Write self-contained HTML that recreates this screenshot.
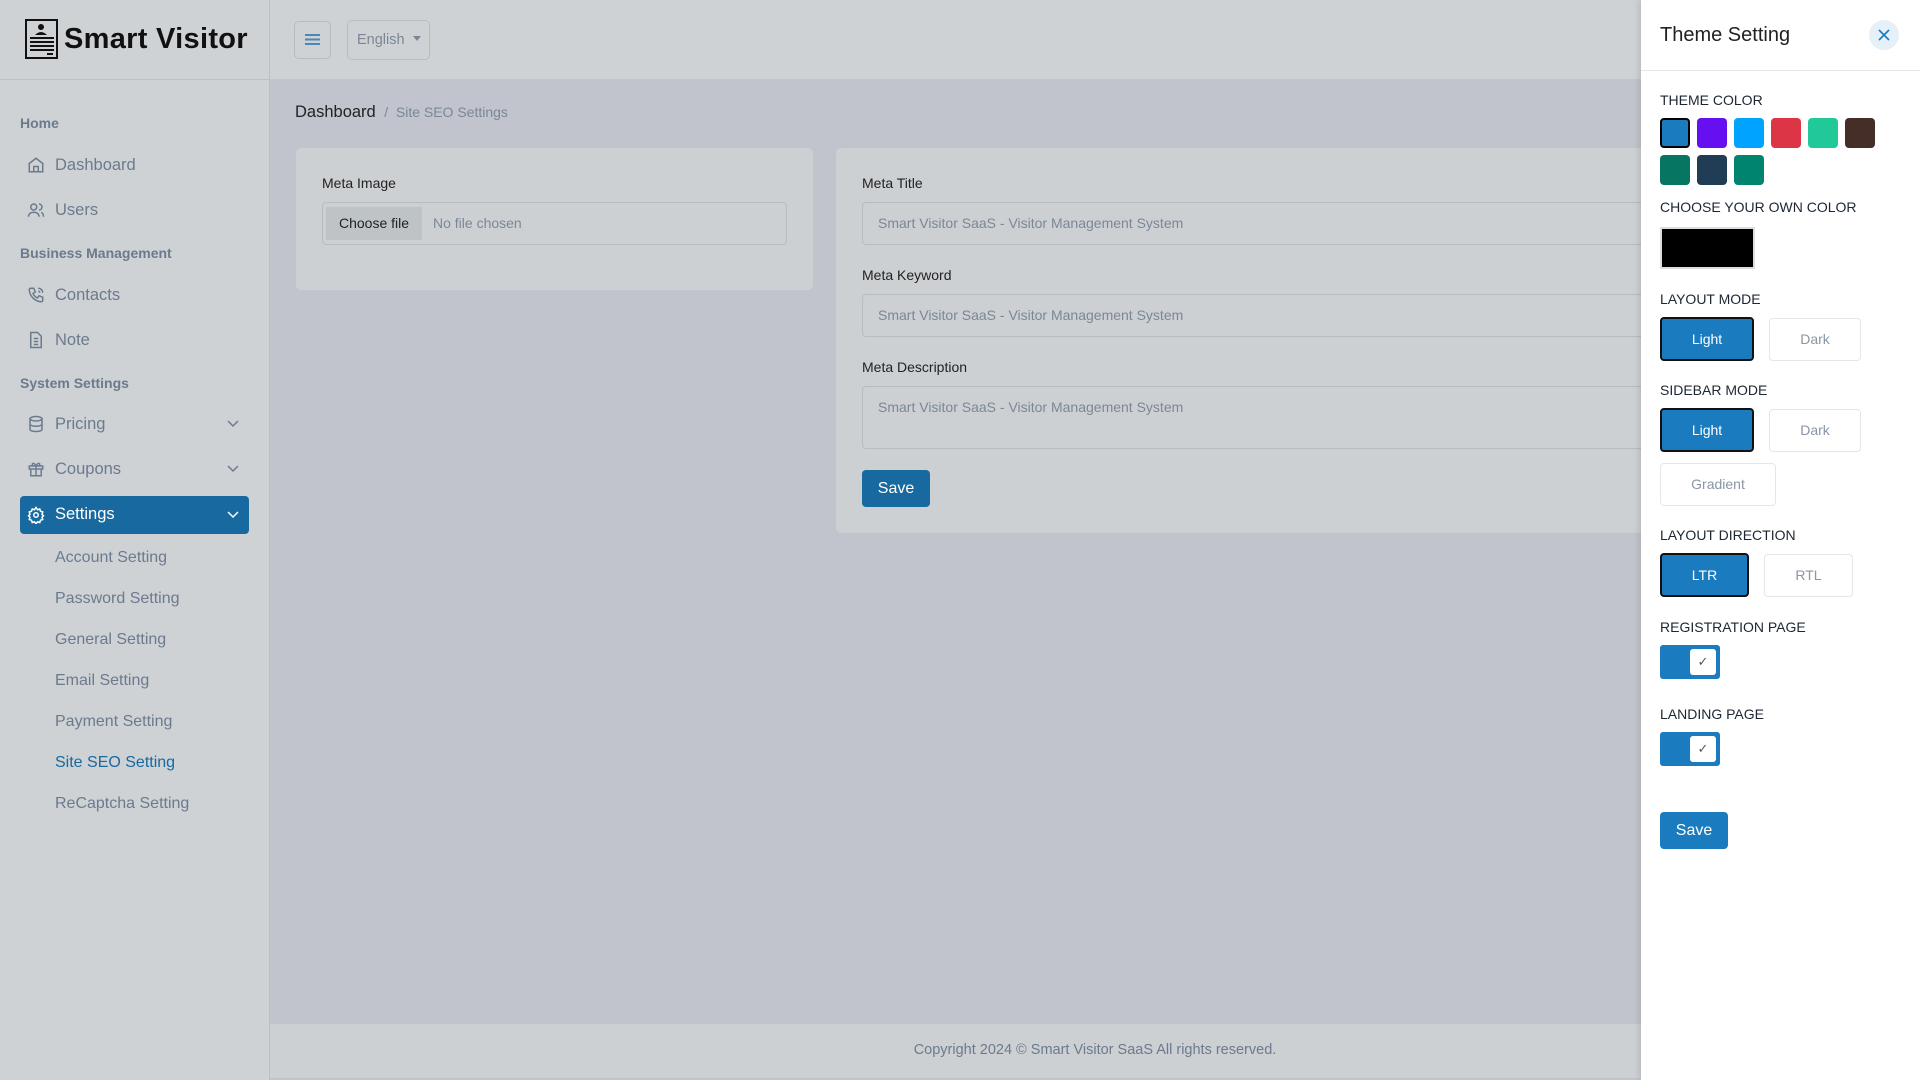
<!DOCTYPE html>
<html><head><meta charset="utf-8"><style>
*{box-sizing:border-box;margin:0;padding:0}
body{width:1920px;height:1080px;overflow:hidden;font-family:"Liberation Sans",sans-serif;background:#c1c4cc;position:relative}
.abs{position:absolute}
.sb{left:0;top:0;width:270px;height:1080px;background:#cfd2d5;border-right:1px solid #bcc0c5}
.sbh{left:0;top:0;width:269px;height:80px;border-bottom:1px solid #bcc0c5}
.logo{left:64px;top:23px;font-weight:bold;font-size:29px;color:#111;letter-spacing:.3px}
.sec{left:20px;font-size:14px;font-weight:bold;color:#6b7a8d}
.mi{left:55px;font-size:16.5px;color:#6b7a8d}
.ic{left:27px;width:18px;height:18px}
.sub{left:55px;font-size:16px;color:#6b7a8d}
.hdr{left:270px;top:0;width:1371px;height:80px;background:#cfd2d5;border-bottom:1px solid #c3c6cb}
.card{background:#cdd0d3;border-radius:5px}
.lbl{font-size:14px;color:#222}
.inp{border:1px solid #b8bcc1;border-radius:4px;font-size:14px;color:#7b8796;padding-left:15px;line-height:41px}
.panel{left:1641px;top:0;width:279px;height:1080px;background:#fff;box-shadow:-2px 0 6px rgba(0,0,0,.12)}
.pl{left:19px;font-size:14px;color:#1d2733}
.sw{width:30px;height:30px;border-radius:4px}
.btn{border-radius:4px;font-size:14px;text-align:center}
.on{background:#1b7bbf;color:#fff;border:2px solid #111}
.off{background:#fff;color:#8a96a5;border:1px solid #e3e6ea}
.tg{left:19px;width:60px;height:34px;background:#1b7bbf;border-radius:3px}
.tg div{position:absolute;right:4px;top:4px;width:26px;height:26px;background:#fff;border-radius:3px;font-size:13px;color:#555;text-align:center;line-height:26px}
</style></head><body>
<div class="abs sb"></div>
<div class="abs sbh"></div>
<svg class="abs" style="left:25px;top:19px" width="34" height="41" viewBox="0 0 34 41"><rect x="1" y="1" width="31" height="38" fill="none" stroke="#111" stroke-width="2"/><circle cx="16" cy="8" r="3" fill="#111"/><path d="M10 16 Q16 10 22 16Z" fill="#111"/><path d="M5 19h24M5 23h24M5 27h24M5 31h24M22 35h6" stroke="#111" stroke-width="2"/></svg>
<div class="abs logo">Smart Visitor</div>
<div class="abs sec" style="top:115px">Home</div>
<svg class="abs ic" style="top:156px" viewBox="0 0 24 24" fill="none" stroke="#6b7a8d" stroke-width="2"><path d="M3 10 12 3l9 7v11H3z"/><path d="M9 21v-7h6v7"/></svg>
<div class="abs mi" style="top:156px">Dashboard</div>
<svg class="abs ic" style="top:201px" viewBox="0 0 24 24" fill="none" stroke="#6b7a8d" stroke-width="2"><circle cx="9" cy="8" r="4"/><path d="M2 21c0-4 3-6 7-6s7 2 7 6M16 4a4 4 0 0 1 0 8M19 15c2 1 3 3 3 6"/></svg>
<div class="abs mi" style="top:201px">Users</div>
<div class="abs sec" style="top:245px">Business Management</div>
<svg class="abs ic" style="top:286px" viewBox="0 0 24 24" fill="none" stroke="#6b7a8d" stroke-width="2"><path d="M5 3h4l2 5-3 2a11 11 0 0 0 6 6l2-3 5 2v4a2 2 0 0 1-2 2A17 17 0 0 1 3 5a2 2 0 0 1 2-2M15 3a6 6 0 0 1 6 6M15 7a2 2 0 0 1 2 2"/></svg>
<div class="abs mi" style="top:286px">Contacts</div>
<svg class="abs ic" style="top:331px" viewBox="0 0 24 24" fill="none" stroke="#6b7a8d" stroke-width="2"><path d="M5 2h9l5 5v15H5z"/><path d="M9 10h6M9 14h6M9 18h6"/></svg>
<div class="abs mi" style="top:331px">Note</div>
<div class="abs sec" style="top:375px">System Settings</div>
<svg class="abs ic" style="top:415px" viewBox="0 0 24 24" fill="none" stroke="#6b7a8d" stroke-width="2"><ellipse cx="12" cy="5" rx="8" ry="3"/><path d="M4 5v14c0 2 4 3 8 3s8-1 8-3V5M4 12c0 2 4 3 8 3s8-1 8-3"/></svg>
<div class="abs mi" style="top:415px">Pricing</div>
<svg class="abs" style="left:227px;top:420px" width="12" height="8" viewBox="0 0 12 8" fill="none" stroke="#6b7a8d" stroke-width="1.5"><path d="M1 1l5 5 5-5"/></svg>
<svg class="abs ic" style="top:460px" viewBox="0 0 24 24" fill="none" stroke="#6b7a8d" stroke-width="2"><rect x="3" y="8" width="18" height="4"/><path d="M5 12v9h14v-9M12 8v13M12 8C9 2 5 5 8 8M12 8c3-6 7-3 4 0"/></svg>
<div class="abs mi" style="top:460px">Coupons</div>
<svg class="abs" style="left:227px;top:465px" width="12" height="8" viewBox="0 0 12 8" fill="none" stroke="#6b7a8d" stroke-width="1.5"><path d="M1 1l5 5 5-5"/></svg>
<div class="abs" style="left:20px;top:496px;width:229px;height:38px;background:#1769a0;border-radius:4px"></div>
<svg class="abs ic" style="top:506px" viewBox="0 0 24 24" fill="none" stroke="#fff" stroke-width="2"><circle cx="12" cy="12" r="3"/><path d="M12 2l2 3 3-1 1 3 3 1-1 3 2 2-2 2 1 3-3 1-1 3-3-1-2 3-2-3-3 1-1-3-3-1 1-3-2-2 2-2-1-3 3-1 1-3 3 1z"/></svg>
<div class="abs mi" style="top:505px;color:#fff">Settings</div>
<svg class="abs" style="left:227px;top:511px" width="12" height="8" viewBox="0 0 12 8" fill="none" stroke="#fff" stroke-width="1.5"><path d="M1 1l5 5 5-5"/></svg>
<div class="abs sub" style="top:549px">Account Setting</div>
<div class="abs sub" style="top:590px">Password Setting</div>
<div class="abs sub" style="top:631px">General Setting</div>
<div class="abs sub" style="top:672px">Email Setting</div>
<div class="abs sub" style="top:713px">Payment Setting</div>
<div class="abs sub" style="top:754px;color:#1769a0">Site SEO Setting</div>
<div class="abs sub" style="top:795px">ReCaptcha Setting</div>

<div class="abs hdr"></div>
<div class="abs" style="left:294px;top:21px;width:37px;height:38px;border:1px solid #b8bcc1;border-radius:5px"></div>
<svg class="abs" style="left:305px;top:33px" width="15" height="13" viewBox="0 0 15 13" stroke="#4a87b5" stroke-width="2"><path d="M0 2h15M0 6.5h15M0 11h15"/></svg>
<div class="abs" style="left:347px;top:20px;width:83px;height:40px;border:1px solid #b8bcc1;border-radius:5px;font-size:14.5px;color:#7b8796;padding:11px 0 0 9px">English</div>
<div class="abs" style="left:413px;top:36px;border:4px solid transparent;border-top:5px solid #7b8796"></div>

<div class="abs" style="left:295px;top:103px;font-size:16.5px;color:#222">Dashboard <span style="color:#7b8796;font-size:14px">&nbsp;/&nbsp; Site SEO Settings</span></div>

<div class="abs card" style="left:296px;top:148px;width:517px;height:142px"></div>
<div class="abs lbl" style="left:322px;top:175px">Meta Image</div>
<div class="abs inp" style="left:322px;top:202px;width:465px;height:43px;padding-left:0"><span style="position:absolute;left:3px;top:4px;width:96px;height:33px;background:#bec3c6;color:#222;text-align:center;line-height:33px">Choose file</span><span style="position:absolute;left:110px;top:0">No file chosen</span></div>

<div class="abs card" style="left:836px;top:148px;width:830px;height:385px"></div>
<div class="abs lbl" style="left:862px;top:175px">Meta Title</div>
<div class="abs inp" style="left:862px;top:202px;width:800px;height:43px">Smart Visitor SaaS - Visitor Management System</div>
<div class="abs lbl" style="left:862px;top:267px">Meta Keyword</div>
<div class="abs inp" style="left:862px;top:294px;width:800px;height:43px">Smart Visitor SaaS - Visitor Management System</div>
<div class="abs lbl" style="left:862px;top:359px">Meta Description</div>
<div class="abs inp" style="left:862px;top:386px;width:800px;height:63px;line-height:40px">Smart Visitor SaaS - Visitor Management System</div>
<div class="abs btn" style="left:862px;top:470px;width:68px;height:37px;background:#1769a0;color:#fff;font-size:16px;line-height:37px">Save</div>

<div class="abs" style="left:270px;top:1024px;width:1650px;height:54px;background:#cdd0d3;text-align:center;font-size:14.5px;color:#6b7a8d;line-height:52px">Copyright 2024 © Smart Visitor SaaS All rights reserved.</div>

<div class="abs panel">
<div class="abs" style="left:19px;top:24px;font-size:20px;color:#222">Theme Setting</div>
<div class="abs" style="left:228px;top:20px;width:30px;height:30px;border-radius:50%;background:#e6f0f9"></div>
<svg class="abs" style="left:237px;top:29px" width="12" height="12" viewBox="0 0 12 12" stroke="#1b7bbf" stroke-width="1.6"><path d="M1 1l10 10M11 1 1 11"/></svg>
<div class="abs" style="left:0;top:70px;width:279px;height:1px;background:#e3e6ea"></div>
<div class="abs pl" style="top:92px">THEME COLOR</div>
<div class="abs sw" style="left:19px;top:118px;background:#1b7bbf;border:2px solid #000"></div>
<div class="abs sw" style="left:56px;top:118px;background:#6610f2"></div>
<div class="abs sw" style="left:93px;top:118px;background:#00a3ff"></div>
<div class="abs sw" style="left:130px;top:118px;background:#dc3545"></div>
<div class="abs sw" style="left:167px;top:118px;background:#20c997"></div>
<div class="abs sw" style="left:204px;top:118px;background:#452e28"></div>
<div class="abs sw" style="left:19px;top:155px;background:#067561"></div>
<div class="abs sw" style="left:56px;top:155px;background:#213d55"></div>
<div class="abs sw" style="left:93px;top:155px;background:#008470"></div>
<div class="abs pl" style="top:199px">CHOOSE YOUR OWN COLOR</div>
<div class="abs" style="left:19px;top:227px;width:95px;height:42px;background:#000;border:2px solid #ddd"></div>
<div class="abs pl" style="top:291px">LAYOUT MODE</div>
<div class="abs btn on" style="left:19px;top:317px;width:94px;height:44px;line-height:40px">Light</div>
<div class="abs btn off" style="left:128px;top:318px;width:92px;height:43px;line-height:41px">Dark</div>
<div class="abs pl" style="top:382px">SIDEBAR MODE</div>
<div class="abs btn on" style="left:19px;top:408px;width:94px;height:44px;line-height:40px">Light</div>
<div class="abs btn off" style="left:128px;top:409px;width:92px;height:43px;line-height:41px">Dark</div>
<div class="abs btn off" style="left:19px;top:463px;width:116px;height:43px;line-height:41px">Gradient</div>
<div class="abs pl" style="top:527px">LAYOUT DIRECTION</div>
<div class="abs btn on" style="left:19px;top:553px;width:89px;height:44px;line-height:40px">LTR</div>
<div class="abs btn off" style="left:123px;top:554px;width:89px;height:43px;line-height:41px">RTL</div>
<div class="abs pl" style="top:619px">REGISTRATION PAGE</div>
<div class="abs tg" style="top:645px"><div>✓</div></div>
<div class="abs pl" style="top:706px">LANDING PAGE</div>
<div class="abs tg" style="top:732px"><div>✓</div></div>
<div class="abs btn" style="left:19px;top:812px;width:68px;height:37px;background:#1b7bbf;color:#fff;font-size:16px;line-height:37px">Save</div>
</div>
</body></html>
